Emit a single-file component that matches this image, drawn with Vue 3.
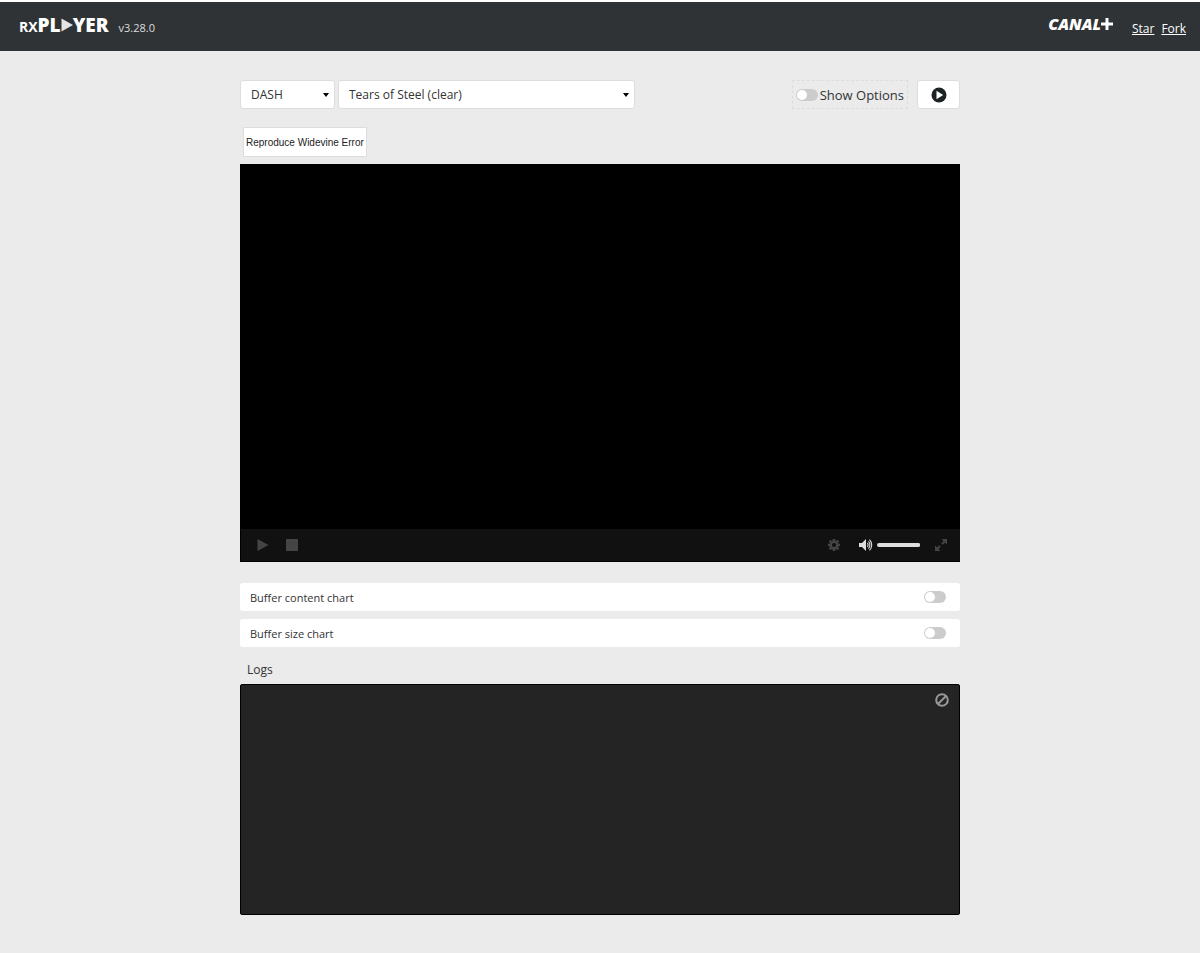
<script setup>
import { ref } from 'vue'

const transport = ref('DASH')
const content = ref('Tears of Steel (clear)')
const showOptions = ref(false)
const volume = ref(100)
const charts = ref([
  { id: 'buffer-content', label: 'Buffer content chart', on: false },
  { id: 'buffer-size', label: 'Buffer size chart', on: false },
])
</script>

<template>
  <div class="page">
    <header class="topbar">
      <div class="brand">
        <a class="logo" href="#" aria-label="RxPlayer">
          <span class="logo-small">RX</span><span>PL</span><svg class="logo-play" viewBox="0 0 12 14" aria-hidden="true"><path d="M0.5 0.5 L12 7 L0.5 13.5 Z" /></svg><span>YER</span>
        </a>
        <span class="version">v3.28.0</span>
      </div>
      <nav class="links">
        <a class="canal" href="#">CANAL<svg viewBox="0 0 12 12" aria-hidden="true"><path d="M6 0v12M0 6h12" /></svg></a>
        <a class="link" href="#">Star</a>
        <a class="link" href="#">Fork</a>
      </nav>
    </header>

    <main class="content">
      <div class="selectors">
        <div class="select-box transport">
          <select v-model="transport" aria-label="Transport">
            <option>DASH</option>
          </select>
          <svg class="caret" viewBox="0 0 6 4" aria-hidden="true"><path d="M0 0h6L3 4z" /></svg>
        </div>
        <div class="select-box media">
          <select v-model="content" aria-label="Content">
            <option>Tears of Steel (clear)</option>
          </select>
          <svg class="caret" viewBox="0 0 6 4" aria-hidden="true"><path d="M0 0h6L3 4z" /></svg>
        </div>
        <label class="options" for="show-options">
          <input id="show-options" v-model="showOptions" class="switch" type="checkbox" />
          Show Options
        </label>
        <button class="load" type="button" aria-label="Load content">
          <svg viewBox="0 0 16 16" aria-hidden="true">
            <circle cx="8" cy="8" r="7.5" />
            <path d="M5.5 3.7 L12.2 8 L5.5 12.3 Z" fill="#fff" />
          </svg>
        </button>
      </div>

      <button class="reproduce" type="button">Reproduce Widevine Error</button>

      <section class="player" aria-label="Video player">
        <div class="video"></div>
        <div class="controls">
          <button class="control play" type="button" aria-label="Play">
            <svg viewBox="0 0 12 13" aria-hidden="true"><path d="M0 0 L12 6.5 L0 13 Z" /></svg>
          </button>
          <button class="control stop" type="button" aria-label="Stop">
            <svg viewBox="0 0 12 12" aria-hidden="true"><path d="M0 0h12v12H0z" /></svg>
          </button>
          <button class="control settings" type="button" aria-label="Settings">
            <svg viewBox="0 0 12 12" aria-hidden="true">
              <g fill="none" stroke="currentColor">
                <circle cx="6" cy="6" r="3.3" stroke-width="2.4" />
                <path d="M6 0v2M6 10v2M0 6h2M10 6h2M1.6 1.6l1.5 1.5M8.9 8.9l1.5 1.5M10.4 1.6L8.9 3.1M3.1 8.9l-1.5 1.5" stroke-width="2.6" />
              </g>
            </svg>
          </button>
          <button class="control sound" type="button" aria-label="Mute">
            <svg viewBox="0 0 14 12" aria-hidden="true">
              <path d="M0 4h3l4-4v12L3 8H0z" />
              <path d="M8.3 4.1a2.6 2.6 0 0 1 0 3.8M9.4 2.4a5 5 0 0 1 0 7.2M10.5 0.7a7.4 7.4 0 0 1 0 10.6" fill="none" stroke="currentColor" stroke-width="1.1" />
            </svg>
          </button>
          <input v-model="volume" class="volume" type="range" min="0" max="100" aria-label="Volume" />
          <button class="control expand" type="button" aria-label="Full screen">
            <svg viewBox="0 0 12 12" aria-hidden="true">
              <path d="M6.5 0H12v5.5zM0 6.5V12h5.5z" />
              <path d="M10.5 1.5L7 5M5 7L1.5 10.5" fill="none" stroke="currentColor" stroke-width="2.2" />
            </svg>
          </button>
        </div>
      </section>

      <div class="charts">
        <label v-for="chart in charts" :key="chart.id" class="chart" :for="chart.id">
          {{ chart.label }}
          <input :id="chart.id" v-model="chart.on" class="switch" type="checkbox" />
        </label>
      </div>

      <h2 class="logs-title">Logs</h2>
      <section class="logs" aria-label="Logs">
        <button class="clear" type="button" aria-label="Clear logs">
          <svg viewBox="0 0 14 14" aria-hidden="true"><circle cx="7" cy="7" r="5.8" /><path d="M3.2 10.8l7.6-7.6" /></svg>
        </button>
      </section>
    </main>
  </div>
</template>

<style>
html,
body {
  background: #ebebeb;
}
</style>

<style scoped>
.page {
  border-top: 2px solid #fff;
  font-family: "Open Sans", "Noto Sans", sans-serif;
  font-size: 12px;
  color: #333;
}
.page *,
.page *::before {
  box-sizing: border-box;
}
svg {
  display: block;
  fill: currentColor;
}
button {
  font: inherit;
  padding: 0;
  cursor: pointer;
}
.topbar {
  display: flex;
  justify-content: space-between;
  height: 49px;
  padding: 0 14px 0 19px;
  background: #2f3335;
  color: #fff;
}
.brand,
.logo,
.links {
  display: flex;
  align-items: baseline;
}
.brand {
  gap: 10px;
  padding-top: 10px;
}
.logo {
  color: #fff;
  font-size: 19px;
  font-weight: 800;
  line-height: 26px;
  text-decoration: none;
}
.logo-small {
  font-size: 14px;
  font-weight: 700;
}
.logo-play {
  width: 12px;
  height: 14px;
  fill: #e4e4e4;
}
.version {
  font-size: 11px;
  color: #ddd;
}
.links {
  align-items: flex-start;
  padding-top: 8px;
  gap: 7px;
}
.canal {
  display: flex;
  align-items: center;
  margin-right: 12px;
  color: #fff;
  font-size: 16px;
  font-weight: 800;
  font-style: italic;
  line-height: 28px;
  text-decoration: none;
}
.canal svg {
  width: 12px;
  height: 12px;
  stroke: #fff;
  stroke-width: 3;
}
.link {
  padding-top: 10px;
  color: #fff;
  font-size: 12px;
  line-height: 18px;
}
.content {
  width: 60%;
  margin: 0 auto;
  padding: 29px 0 38px;
}
.selectors {
  display: flex;
  height: 29px;
}
.select-box {
  position: relative;
}
.transport {
  flex: 0 0 95px;
  margin-right: 3px;
}
.media {
  flex: 0 0 297px;
}
select {
  appearance: none;
  width: 100%;
  height: 100%;
  padding: 0 20px 0 10px;
  border: 1px solid #ddd;
  border-radius: 3px;
  background: #fff;
  color: #333;
  font: 12px "Open Sans", "Noto Sans", sans-serif;
}
.caret {
  position: absolute;
  top: 13px;
  right: 6px;
  width: 6px;
  height: 4px;
  fill: #000;
  pointer-events: none;
}
.options {
  display: flex;
  align-items: center;
  gap: 2px;
  margin-left: auto;
  margin-right: 9px;
  padding: 0 3px;
  border: 1px dashed #ddd;
  font-size: 13px;
  white-space: nowrap;
}
.switch {
  appearance: none;
  flex: none;
  width: 22px;
  height: 12px;
  margin: 0;
  padding: 1px;
  border-radius: 6px;
  background: #ccc;
  cursor: pointer;
}
.switch::before {
  content: "";
  display: block;
  width: 10px;
  height: 10px;
  border-radius: 50%;
  background: #fff;
}
.switch:checked::before {
  margin-left: auto;
}
.load {
  display: grid;
  place-items: center;
  width: 43px;
  border: 1px solid #ddd;
  border-radius: 3px;
  background: #fff;
  color: #1d2224;
}
.load svg {
  width: 16px;
  height: 16px;
}
.reproduce {
  display: block;
  height: 30px;
  margin: 18px 0 7px 3px;
  padding: 0 2px;
  border: 1px solid #ddd;
  background: #fff;
  color: #222;
  font-family: "Liberation Sans", Arial, sans-serif;
  font-size: 10px;
}
.player {
  background: #000;
}
.video {
  height: 365px;
}
.controls {
  display: flex;
  align-items: center;
  height: 33px;
  padding: 0 13px 0 16px;
  border: solid #000;
  border-width: 0 0 1px 1px;
  background: #111;
}
.control {
  border: 0;
  background: none;
  color: #444;
}
.control svg {
  width: 12px;
  height: 12px;
}
.stop {
  margin-left: 17px;
}
.settings {
  margin-left: auto;
}
.sound {
  margin-left: 19px;
  color: #ddd;
}
.sound svg {
  width: 14px;
}
.volume {
  appearance: none;
  width: 43px;
  height: 4px;
  margin: 0 15px 0 4px;
  border-radius: 2px;
  background: #ddd;
}
.volume::-webkit-slider-thumb {
  appearance: none;
  width: 4px;
  height: 4px;
  border-radius: 2px;
  background: #ddd;
}
.charts {
  display: grid;
  gap: 8px;
  margin-top: 21px;
}
.chart {
  display: flex;
  align-items: center;
  justify-content: space-between;
  height: 28px;
  padding: 0 14px 0 10px;
  border-radius: 3px;
  background: #fff;
  font-size: 11px;
}
.logs-title {
  margin: 14px 0 5px 7px;
  font-size: 12px;
  font-weight: 400;
  line-height: 18px;
}
.logs {
  display: flex;
  justify-content: flex-end;
  align-items: flex-start;
  min-height: 231px;
  padding: 8px 10px;
  border: 1px solid #000;
  border-radius: 2px;
  background: #242424;
}
.clear {
  border: 0;
  background: none;
}
.clear svg {
  width: 14px;
  height: 14px;
  fill: none;
  stroke: #999;
  stroke-width: 2;
}
</style>
